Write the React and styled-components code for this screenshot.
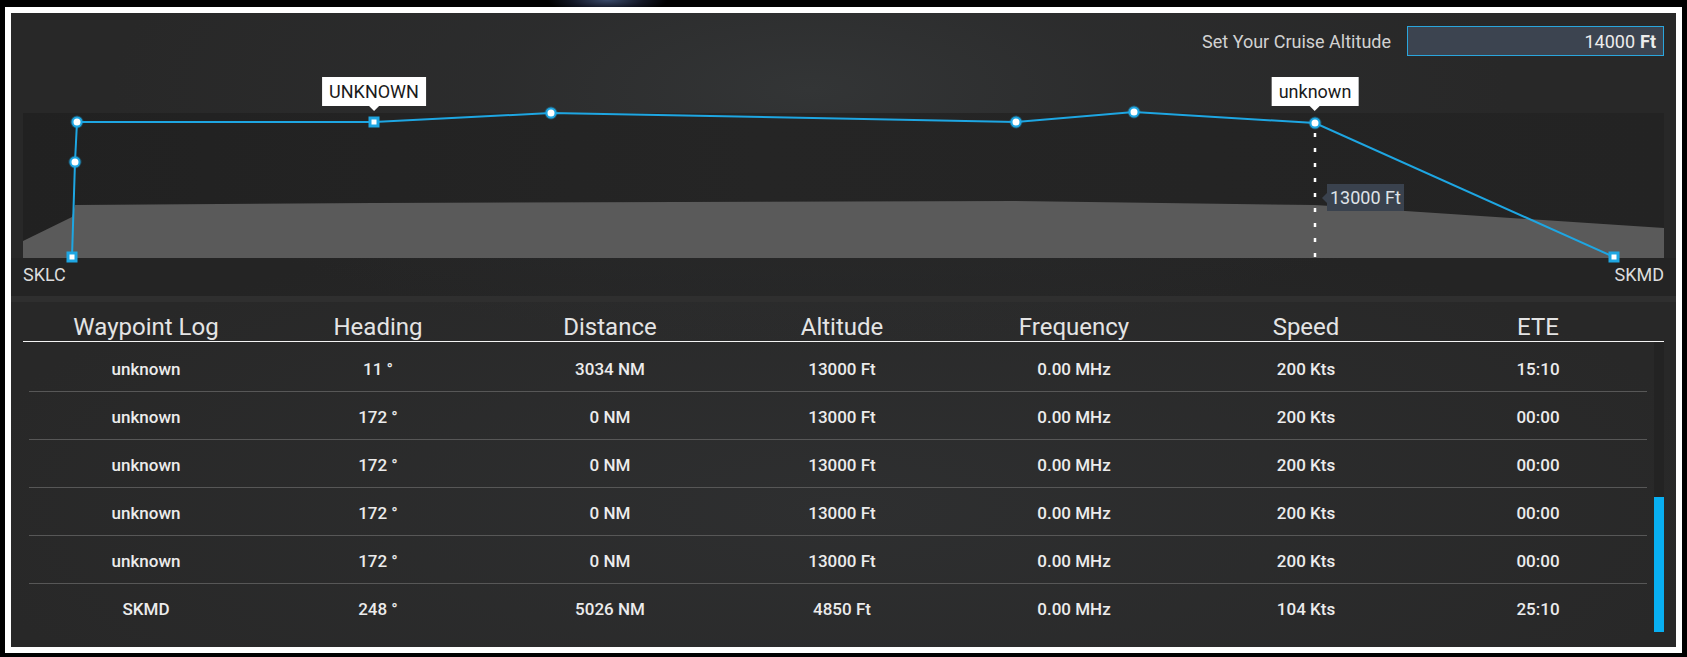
import React from 'react';
import styled, { createGlobalStyle } from 'styled-components';

const GlobalStyle = createGlobalStyle`
  html, body { margin: 0; padding: 0; background: #000; }
  body {
    width: 1687px; height: 657px; overflow: hidden;
    font-family: Roboto, "Noto Sans", "Liberation Sans", sans-serif;
  }
  * { box-sizing: border-box; }
`;

const Screen = styled.div`
  width: 1687px;
  height: 657px;
  padding: 7px 5px 0 5px;
  background: radial-gradient(ellipse 60px 14px at 36% 0%, #3a4a6a 0%, #121624 60%, #000 100%), #000;
`;

const Frame = styled.div`
  width: 1677px;
  height: 646px;
  border: 6px solid #fff;
  display: flex;
  flex-direction: column;
  padding: 13px 12px 0 12px;
  background:
    radial-gradient(ellipse 700px 260px at 48% 12%, #333536 0%, rgba(46,47,48,0.6) 45%, rgba(40,40,40,0) 100%),
    radial-gradient(ellipse 900px 300px at 50% 78%, #2e2f30 0%, rgba(42,42,42,0) 100%),
    #282828;
`;

const TopBar = styled.div`
  display: flex;
  justify-content: flex-end;
  align-items: center;
  gap: 16px;
  height: 30px;
`;

const TopLabel = styled.span`
  font-size: 18px;
  color: #d2d2d2;
`;

const AltField = styled.div`
  width: 257px;
  height: 30px;
  border: 1px solid #2aa6dd;
  background: #3c4450;
  display: flex;
  align-items: center;
  justify-content: flex-end;
  gap: 5px;
  padding-right: 7px;
  font-size: 18px;
  color: #ececec;
`;

const Unit = styled.span`
  font-weight: 700;
`;

const ChartBand = styled.div`
  position: relative;
  margin-top: 57px;
  height: 145px;
  background: linear-gradient(90deg, #212121 0%, #252525 45%, #232323 100%);
`;

const ChartSvg = styled.svg`
  position: absolute;
  left: 0;
  top: 0;
  overflow: visible;
`;

const PointLabel = styled.div`
  position: absolute;
  top: -36px;
  left: ${p => p.$x}px;
  transform: translateX(-50%);
  height: 29px;
  padding: 0 7px;
  background: #fff;
  color: #1a1a1a;
  font-size: 18px;
  line-height: 29px;
  white-space: nowrap;
  &::after {
    content: '';
    position: absolute;
    left: 50%;
    bottom: -5px;
    margin-left: -5px;
    border-left: 5px solid transparent;
    border-right: 5px solid transparent;
    border-top: 5px solid #fff;
  }
`;

const AltTip = styled.div`
  position: absolute;
  left: ${p => p.$x}px;
  top: ${p => p.$y}px;
  height: 27px;
  padding: 0 3px 0 3px;
  background: #3a424e;
  color: #dfe3e8;
  font-size: 18px;
  line-height: 27px;
  white-space: nowrap;
  &::before {
    content: '';
    position: absolute;
    left: -5px;
    top: 50%;
    margin-top: -5px;
    border-top: 5px solid transparent;
    border-bottom: 5px solid transparent;
    border-right: 5px solid #3a424e;
  }
`;

const AirportRow = styled.div`
  display: flex;
  justify-content: space-between;
  height: 38px;
  margin: 0 -12px;
  padding: 6px 12px 0 12px;
  background: rgba(0, 0, 0, 0.09);
  font-size: 18px;
  line-height: 21px;
  color: #dcdcdc;
`;

const Stripe = styled.div`
  height: 6px;
  margin: 0 -12px;
  background: #2f2f2f;
`;

const HeaderRow = styled.div`
  display: grid;
  grid-template-columns: repeat(7, 232px);
  height: 40px;
  padding: 12px 10px 0 7px;
  border-bottom: 1px solid #f4f4f4;
`;

const HeaderCell = styled.div`
  text-align: center;
  font-size: 24px;
  line-height: 27px;
  color: #e4e4e4;
`;

const Body = styled.div`
  display: flex;
  height: 290px;
  padding-left: 7px;
`;

const RowList = styled.div`
  width: 1624px;
  padding-top: 2px;
  display: flex;
  flex-direction: column;
`;

const Row = styled.div`
  position: relative;
  display: grid;
  grid-template-columns: repeat(7, 232px);
  align-items: center;
  height: 48px;
  padding-top: 1px;
  &:not(:last-child)::after {
    content: '';
    position: absolute;
    left: -1px;
    right: 7px;
    bottom: 0;
    height: 1px;
    background: #575757;
  }
`;

const Cell = styled.div`
  text-align: center;
  font-size: 17px;
  font-weight: 500;
  color: #ececec;
`;

const Track = styled.div`
  width: 10px;
  background: #232323;
  display: flex;
  flex-direction: column;
  justify-content: flex-end;
`;

const Thumb = styled.div`
  height: 135px;
  background: #08aff2;
`;

const BLUE = '#1ea6e2';

const path = [
  [49, 144, 'sq'],
  [52, 49, 'c'],
  [54, 9, 'c'],
  [351, 9, 'sq'],
  [528, 0, 'c'],
  [993, 9, 'c'],
  [1111, -1, 'c'],
  [1292, 10, 'c'],
  [1591, 144, 'sq'],
];

const ground = '0,128 49,104 52,92 351,90 993,88 1292,92 1641,115 1641,145 0,145';

function Marker({ x, y, kind }) {
  if (kind === 'sq') {
    return (
      <g>
        <rect x={x - 5.5} y={y - 5.5} width="11" height="11" fill={BLUE} />
        <rect x={x - 2.5} y={y - 2.5} width="5" height="5" fill="#fff" />
      </g>
    );
  }
  return (
    <g>
      <circle cx={x} cy={y} r="6.5" fill={BLUE} opacity="0.35" />
      <circle cx={x} cy={y} r="4.5" fill="#fff" stroke={BLUE} strokeWidth="2" />
    </g>
  );
}

function ProfileChart() {
  return (
    <ChartBand>
      <ChartSvg width="1641" height="145" viewBox="0 0 1641 145">
        <polygon points={ground} fill="#5a5a5a" />
        <line x1="1292" y1="20" x2="1292" y2="145" stroke="#fff" strokeWidth="2.5" strokeDasharray="4 11" />
        <polyline
          points={path.map(p => `${p[0]},${p[1]}`).join(' ')}
          fill="none"
          stroke={BLUE}
          strokeWidth="2"
        />
        {path.map((p, i) => (
          <Marker key={i} x={p[0]} y={p[1]} kind={p[2]} />
        ))}
      </ChartSvg>
      <PointLabel $x={351}>UNKNOWN</PointLabel>
      <PointLabel $x={1292}>unknown</PointLabel>
      <AltTip $x={1304} $y={71}>13000 Ft</AltTip>
    </ChartBand>
  );
}

const headers = ['Waypoint Log', 'Heading', 'Distance', 'Altitude', 'Frequency', 'Speed', 'ETE'];

const rows = [
  ['unknown', '11 °', '3034 NM', '13000 Ft', '0.00 MHz', '200 Kts', '15:10'],
  ['unknown', '172 °', '0 NM', '13000 Ft', '0.00 MHz', '200 Kts', '00:00'],
  ['unknown', '172 °', '0 NM', '13000 Ft', '0.00 MHz', '200 Kts', '00:00'],
  ['unknown', '172 °', '0 NM', '13000 Ft', '0.00 MHz', '200 Kts', '00:00'],
  ['unknown', '172 °', '0 NM', '13000 Ft', '0.00 MHz', '200 Kts', '00:00'],
  ['SKMD', '248 °', '5026 NM', '4850 Ft', '0.00 MHz', '104 Kts', '25:10'],
];

export default function App() {
  return (
    <>
      <GlobalStyle />
      <Screen>
        <Frame>
          <TopBar>
            <TopLabel>Set Your Cruise Altitude</TopLabel>
            <AltField>
              <span>14000</span>
              <Unit>Ft</Unit>
            </AltField>
          </TopBar>
          <ProfileChart />
          <AirportRow>
            <span>SKLC</span>
            <span>SKMD</span>
          </AirportRow>
          <Stripe />
          <HeaderRow>
            {headers.map(h => (
              <HeaderCell key={h}>{h}</HeaderCell>
            ))}
          </HeaderRow>
          <Body>
            <RowList>
              {rows.map((r, i) => (
                <Row key={i}>
                  {r.map((c, j) => (
                    <Cell key={j}>{c}</Cell>
                  ))}
                </Row>
              ))}
            </RowList>
            <Track>
              <Thumb />
            </Track>
          </Body>
        </Frame>
      </Screen>
    </>
  );
}
